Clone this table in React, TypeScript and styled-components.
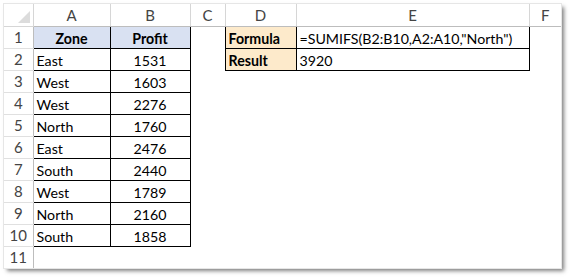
import styled, { createGlobalStyle } from 'styled-components';

const GlobalStyle = createGlobalStyle`
  html, body {
    margin: 0;
    padding: 0;
    background: #ffffff;
  }
  body {
    font-family: Lato, "Liberation Sans", sans-serif;
  }
`;

const colWidths = [29, 77, 80, 35, 71, 233, 32];
const letters = ['A', 'B', 'C', 'D', 'E', 'F'];

const data = [
  ['East', 1531],
  ['West', 1603],
  ['West', 2276],
  ['North', 1760],
  ['East', 2476],
  ['South', 2440],
  ['West', 1789],
  ['North', 2160],
  ['South', 1858],
];

export default function App() {
  return (
    <>
      <GlobalStyle />
      <Page>
        <Sheet>
          <colgroup>
            {colWidths.map((w, i) => (
              <col key={i} style={{ width: w }} />
            ))}
          </colgroup>
          <thead>
            <tr>
              <Corner>
                <CornerMark />
              </Corner>
              {letters.map((l) => (
                <ColHead key={l}>{l}</ColHead>
              ))}
            </tr>
          </thead>
          <tbody>
            <tr>
              <RowHead>1</RowHead>
              <Cell $boxed $fill="#d9e1f2" $bold $align="center">
                Zone
              </Cell>
              <Cell $boxed $fill="#d9e1f2" $bold $align="center">
                Profit
              </Cell>
              <Cell />
              <Cell $boxed $fill="#fdeacb" $bold>
                Formula
              </Cell>
              <Cell $boxed>=SUMIFS(B2:B10,A2:A10,"North")</Cell>
              <Cell />
            </tr>
            {data.map(([zone, profit], i) => (
              <tr key={i}>
                <RowHead>{i + 2}</RowHead>
                <Cell $boxed>{zone}</Cell>
                <Cell $boxed $align="center">
                  {profit}
                </Cell>
                <Cell />
                {i === 0 ? (
                  <>
                    <Cell $boxed $fill="#fdeacb" $bold>
                      Result
                    </Cell>
                    <Cell $boxed>3920</Cell>
                  </>
                ) : (
                  <>
                    <Cell />
                    <Cell />
                  </>
                )}
                <Cell />
              </tr>
            ))}
            <tr>
              <RowHead $last>11</RowHead>
              <Cell />
              <Cell />
              <Cell />
              <Cell />
              <Cell />
              <Cell />
            </tr>
          </tbody>
        </Sheet>
      </Page>
    </>
  );
}

const Page = styled.div`
  width: 570px;
  height: 278px;
  padding: 4px 0 0 4px;
  box-sizing: border-box;
`;

const Sheet = styled.table`
  table-layout: fixed;
  border-collapse: collapse;
  width: 557px;
  background: #ffffff;
  box-shadow: 3px 3px 4px rgba(0, 0, 0, 0.5);
  outline: 1px solid #e6e6e6;
  font-size: 15px;
  color: #000000;
  td,
  th {
    padding: 0;
    height: 22px;
    box-sizing: border-box;
  }
`;

const Corner = styled.th`
  position: relative;
  background: #ffffff;
  border-right: 1px solid #d6d6d6;
  border-bottom: 1px solid #d6d6d6;
  && {
    height: 21px;
  }
`;

const CornerMark = styled.span`
  position: absolute;
  right: 3px;
  bottom: 3px;
  width: 0;
  height: 0;
  border-left: 12px solid transparent;
  border-bottom: 12px solid #dcdcdc;
`;

const ColHead = styled.th`
  font-weight: 400;
  color: #444444;
  text-align: center;
  vertical-align: middle;
  border-right: 1px solid #d6d6d6;
  border-bottom: 1px solid #bdbdbd;
  &:last-child {
    border-right: none;
  }
`;

const RowHead = styled.td<{ $last?: boolean }>`
  color: #444444;
  text-align: center;
  vertical-align: middle;
  border-right: 1px solid #bdbdbd;
  border-bottom: ${(p) => (p.$last ? 'none' : '1px solid #e0e0e0')};
`;

const Cell = styled.td<{
  $boxed?: boolean;
  $fill?: string;
  $bold?: boolean;
  $align?: string;
}>`
  background: ${(p) => p.$fill || 'transparent'};
  border: ${(p) => (p.$boxed ? '1px solid #000000' : 'none')};
  font-size: 14.2px;
  font-weight: ${(p) => (p.$bold ? 700 : 400)};
  text-align: ${(p) => p.$align || 'left'};
  vertical-align: bottom;
  && {
    padding: 0 3px 1px;
  }
  white-space: nowrap;
  overflow: visible;
`;
